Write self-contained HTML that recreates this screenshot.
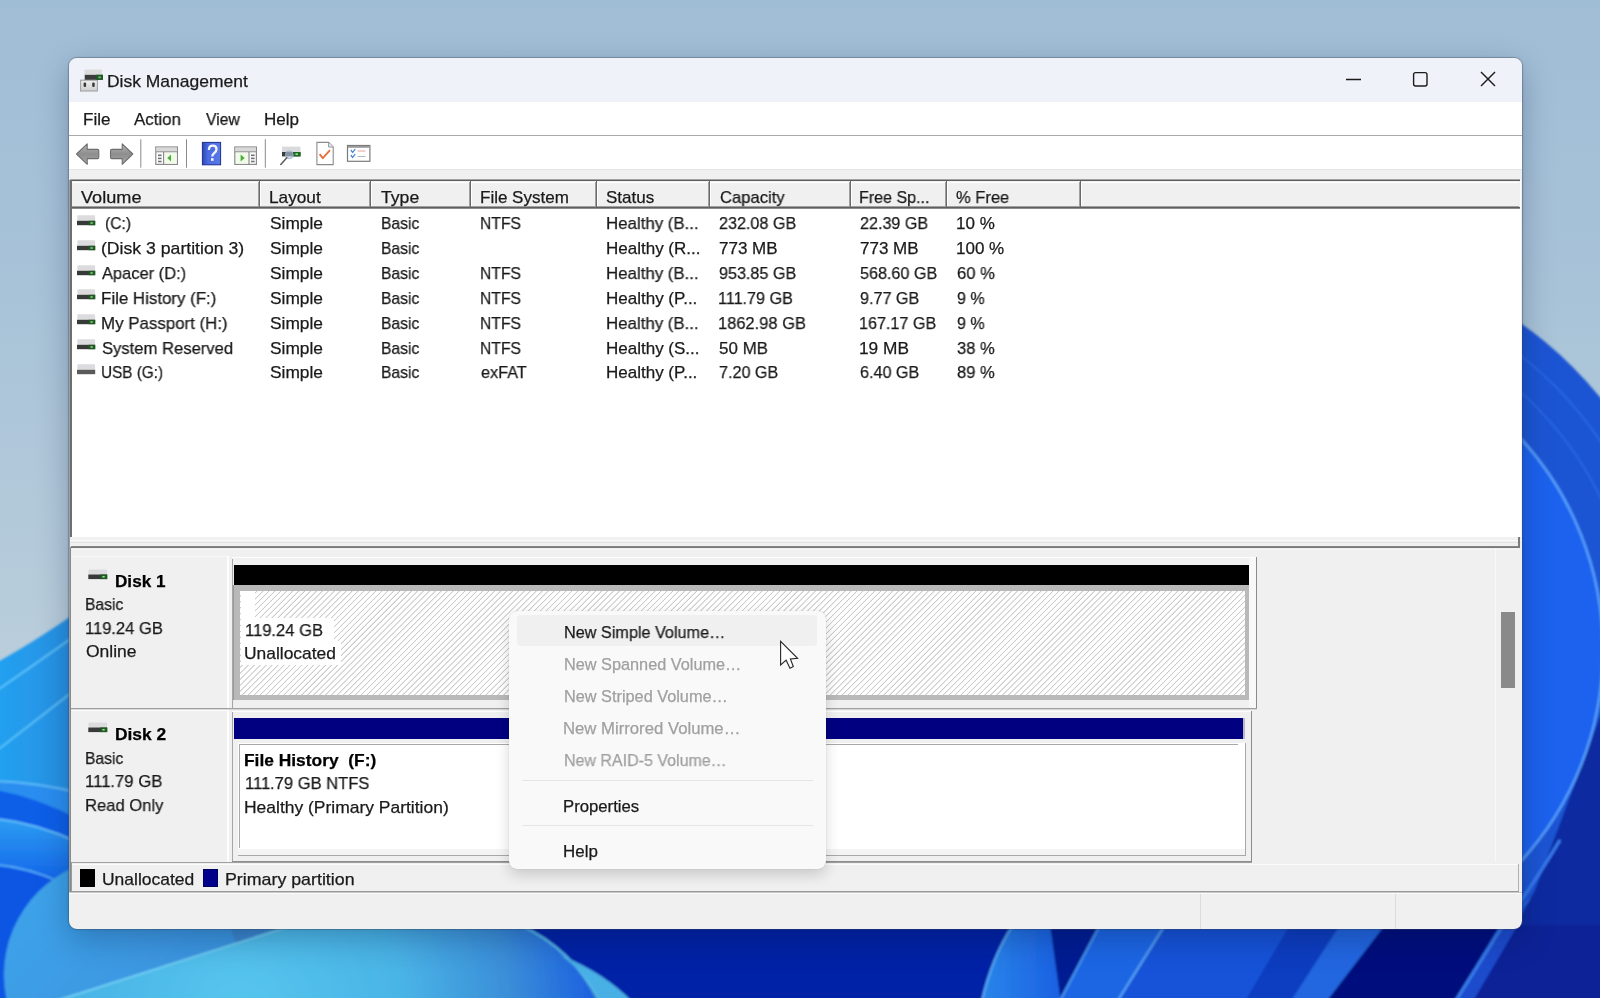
<!DOCTYPE html>
<html><head><meta charset="utf-8"><title>Disk Management</title>
<style>
html,body{margin:0;padding:0;}
body{width:1600px;height:998px;overflow:hidden;position:relative;font-family:"Liberation Sans",sans-serif;background:#a9c4d9;}
.a{position:absolute;}
.t{position:absolute;height:0;line-height:0;white-space:pre;transform-origin:0 0;will-change:transform;-webkit-text-stroke:0.25px currentColor;font-family:"Liberation Sans",sans-serif;}
#shadow{position:absolute;left:69px;top:58px;width:1453px;height:871px;border-radius:8px;box-shadow:0 10px 32px rgba(0,20,60,0.28),0 0 3px rgba(0,0,0,0.2);}
#win{position:absolute;left:69px;top:58px;width:1453px;height:871px;border-radius:8px;overflow:hidden;background:#f0f0f0;}
#wi{position:absolute;left:-69px;top:-58px;width:1600px;height:998px;}
.hdr{position:absolute;top:181px;height:27px;background:#f0f0f0;}
.sep{position:absolute;top:181px;height:26px;width:1px;background:#696969;}
.sepl{position:absolute;top:182px;height:25px;width:1px;background:#a0a0a0;}
.sepw{position:absolute;top:182px;height:24px;width:1px;background:#fff;}
.hatch{background-color:#fff;background-image:repeating-linear-gradient(-45deg,#fff 0px,#fff 2.7px,#cacaca 3.2px,#cacaca 3.6px,#fff 4.2px);}
#menu{position:absolute;left:509px;top:611px;width:317px;height:258px;border-radius:8px;background:#f9f9f9;box-shadow:0 6px 14px rgba(0,0,0,0.16),0 0 1px rgba(0,0,0,0.25);}
</style></head><body>
<svg class="a" style="left:0;top:0" width="1600" height="998" viewBox="0 0 1600 998">
<defs>
<linearGradient id="bg" x1="0" y1="0" x2="0" y2="1">
 <stop offset="0" stop-color="#a0bdd6"/><stop offset="0.3" stop-color="#a8c3d8"/><stop offset="0.65" stop-color="#b9cddb"/><stop offset="1" stop-color="#bdd0dc"/>
</linearGradient>
<linearGradient id="lp" x1="0" y1="0" x2="1" y2="0">
 <stop offset="0" stop-color="#22a2f2"/><stop offset="1" stop-color="#2a8ee0"/>
</linearGradient>
<linearGradient id="circ" x1="0" y1="0" x2="1" y2="1">
 <stop offset="0" stop-color="#3ea6ec"/><stop offset="1" stop-color="#3a8cd8"/>
</linearGradient>
<linearGradient id="cyan" x1="0" y1="0" x2="1" y2="0">
 <stop offset="0" stop-color="#52c2ec"/><stop offset="0.7" stop-color="#44ace2"/><stop offset="1" stop-color="#2a78e0"/>
</linearGradient>
<linearGradient id="teal" x1="0" y1="0" x2="0" y2="1">
 <stop offset="0" stop-color="#3a8ec4"/><stop offset="1" stop-color="#1a5ee0"/>
</linearGradient>
<linearGradient id="rb" x1="0" y1="0" x2="0" y2="1">
 <stop offset="0" stop-color="#1a56d6"/><stop offset="1" stop-color="#1a5ae0"/>
</linearGradient>
<linearGradient id="rb2" x1="0" y1="0" x2="1" y2="0">
 <stop offset="0" stop-color="#0c46d0"/><stop offset="1" stop-color="#1e68f2"/>
</linearGradient>
<linearGradient id="pa" x1="0" y1="0" x2="1" y2="0">
 <stop offset="0" stop-color="#2a86ea"/><stop offset="1" stop-color="#1a5ee2"/>
</linearGradient>
<radialGradient id="cy2" cx="240" cy="1010" r="360" gradientUnits="userSpaceOnUse"><stop offset="0" stop-color="#56c6ee"/><stop offset="0.45" stop-color="#4ab4e6"/><stop offset="0.75" stop-color="#3a8ed8"/><stop offset="1" stop-color="#1a5ee0"/></radialGradient>
<linearGradient id="e5" x1="0" y1="820" x2="0" y2="880" gradientUnits="userSpaceOnUse"><stop offset="0" stop-color="#2c9cf2"/><stop offset="1" stop-color="#1466ea"/></linearGradient>
<filter id="soft" x="-5%" y="-5%" width="110%" height="110%"><feGaussianBlur stdDeviation="1.2"/></filter>
</defs>
<rect width="1600" height="998" fill="url(#bg)"/>
<g filter="url(#soft)">
<rect x="80" y="905" width="530" height="110" fill="#3a86cc"/>
<!-- LEFT petals -->
<path d="M-10,666 Q30,645 80,610 L80,1010 L-10,1010 Z" fill="url(#lp)"/>
<path d="M-10,695 Q30,668 80,632" stroke="#6dd2ff" stroke-width="1.6" fill="none" opacity="0.8"/>
<path d="M-10,756 Q30,725 80,686" stroke="#6dd2ff" stroke-width="1.6" fill="none" opacity="0.8"/>
<path d="M-10,781 Q35,782 80,793 L80,1010 L-10,1010 Z" fill="#2a8ef0"/>
<path d="M-10,781 Q35,782 80,793" stroke="#72ccff" stroke-width="1.8" fill="none" opacity="0.8"/>
<path d="M-10,789 Q35,796 80,820 L80,843 Q35,822 -10,818 Z" fill="#0a5ee8"/>
<path d="M-10,818 Q35,822 80,843 L80,1010 L-10,1010 Z" fill="url(#e5)"/>
<path d="M-10,818 Q35,822 80,843" stroke="#7ad4ff" stroke-width="1.8" fill="none" opacity="0.8"/>
<path d="M-10,866 Q30,868 80,890 L80,1010 L-10,1010 Z" fill="#0a56e4"/>
<path d="M-10,864 Q25,866 60,882" stroke="#6cc4fa" stroke-width="1.6" fill="none" opacity="0.8"/>
<circle cx="122" cy="975" r="118" fill="url(#circ)"/>
<!-- RIGHT strip -->
<circle cx="1290" cy="650" r="400" fill="#1a54d4"/>
<circle cx="1290" cy="650" r="374" fill="none" stroke="#3474ea" stroke-width="2" opacity="0.6"/>
<circle cx="1290" cy="650" r="346" fill="none" stroke="#3474ea" stroke-width="2" opacity="0.6"/>
<path d="M1470,1010 L1535,890 L1610,690 L1610,1010 Z" fill="#0a2aa0"/>
<circle cx="1290" cy="650" r="313" fill="#1b62ee"/>
<circle cx="1290" cy="650" r="313" fill="none" stroke="#5aa6ff" stroke-width="2.2"/>
<!-- BOTTOM strip -->
<path d="M40,1006 L300,923 L520,923 Q575,950 600,1010 L40,1010 Z" fill="url(#cy2)"/>
<path d="M40,1006 L300,923" stroke="#7ad8f8" stroke-width="1.6" fill="none"/>
<path d="M520,925 Q575,950 605,1010 L1530,1010 L1530,925 Z" fill="#0624a6"/>
<path d="M520,925 Q575,950 605,1010" stroke="#5ac0f0" stroke-width="2" fill="none"/>
<path d="M560,955 Q610,975 640,1010 L605,1010 Q590,975 560,955 Z" fill="#48b0e6"/>
<path d="M1013,925 L1050,925 L1066,990 L1062,1010 L980,1010 Q990,960 1013,925 Z" fill="url(#pa)"/>
<path d="M1013,925 Q990,960 980,1010" stroke="#5aaef8" stroke-width="2" fill="none"/>
<path d="M1050,925 L1100,925 L1055,1010 L1062,1010 Z" fill="#061a92"/>
<path d="M1100,925 L1165,925 L1120,1010 L1055,1010 Z" fill="#1c66e4"/>
<path d="M1100,925 L1055,1010" stroke="#4a9af4" stroke-width="2" fill="none"/>
<path d="M1165,925 L1340,925 L1285,1010 L1112,1010 Z" fill="#1452d8"/>
<path d="M1165,925 L1112,1010" stroke="#5aa8f8" stroke-width="2" fill="none"/>
<path d="M1290,925 L1340,925 L1285,1010 L1240,1010 Z" fill="#0c3cc0"/>
<path d="M1340,925 L1385,925 L1320,1010 L1285,1010 Z" fill="#2466e0"/>
<path d="M1385,925 L1500,925 L1450,1010 L1320,1010 Z" fill="#04107c"/>
<path d="M1500,925 L1518,925 L1468,1010 L1450,1010 Z" fill="#1a4ccc"/>
<path d="M1518,925 L1610,925 L1610,1010 L1468,1010 Z" fill="#0a2296"/>
<path d="M1560,840 Q1530,890 1500,930 L1450,1010" stroke="#3a7ef0" stroke-width="3" fill="none"/>
</g>
</svg>

<div id="shadow"></div>
<div id="win"><div id="wi">
<!-- title bar -->
<div class="a" style="left:69px;top:58px;width:1453px;height:44px;background:#eff2f9;"></div>
<svg class="a" style="left:78px;top:68px" width="28" height="26" viewBox="0 0 28 26">
  <defs><linearGradient id="ig1" x1="0" y1="0" x2="0" y2="1"><stop offset="0" stop-color="#efefef"/><stop offset="1" stop-color="#cfcfcf"/></linearGradient></defs>
  <rect x="6.5" y="1.6" width="17.5" height="5.2" fill="#dcdcdc"/>
  <rect x="2.6" y="12.2" width="16.8" height="10.8" fill="url(#ig1)" stroke="#a2a2a2" stroke-width="1.1"/>
  <rect x="5.6" y="14.6" width="2.5" height="4.4" rx="1" fill="#3a3a3a"/><rect x="14.2" y="14.6" width="2.5" height="4.4" rx="1" fill="#3a3a3a"/>
  <rect x="6.7" y="6.8" width="18.3" height="5" fill="#3d3c3c"/>
  <rect x="18" y="6.8" width="7" height="5" fill="#1f5a24"/><rect x="20.4" y="8.5" width="2.4" height="1.6" fill="#7cc07c"/>
</svg>
<svg class="a" style="left:1340px;top:66px" width="170" height="26" viewBox="1340 66 170 26">
  <line x1="1346" y1="79.5" x2="1361" y2="79.5" stroke="#1b1b1b" stroke-width="1.4"/>
  <rect x="1413.6" y="72.6" width="13.4" height="13.4" rx="2" fill="none" stroke="#1b1b1b" stroke-width="1.4"/>
  <line x1="1481" y1="72" x2="1495" y2="86" stroke="#1b1b1b" stroke-width="1.4"/>
  <line x1="1495" y1="72" x2="1481" y2="86" stroke="#1b1b1b" stroke-width="1.4"/>
</svg>
<!-- menu bar + toolbar -->
<div class="a" style="left:69px;top:102px;width:1453px;height:67px;background:#fff;"></div>
<div class="a" style="left:69px;top:135px;width:1453px;height:1px;background:#a9a9a9;"></div>
<svg class="a" style="left:69px;top:135px" width="320" height="34" viewBox="69 135 320 34">
<defs>
<linearGradient id="arr" x1="0" y1="0" x2="0" y2="1"><stop offset="0" stop-color="#b4b4b4"/><stop offset="0.5" stop-color="#8e8e8e"/><stop offset="1" stop-color="#a6a6a6"/></linearGradient>
<linearGradient id="hlp" x1="0" y1="0" x2="1" y2="0"><stop offset="0" stop-color="#2a48b8"/><stop offset="0.3" stop-color="#4a6ae0"/><stop offset="1" stop-color="#5a7ae8"/></linearGradient>
</defs>
<!-- back -->
<path d="M76.5,154 L87.2,143.8 L87.2,149.4 L97.5,149.4 Q98.8,149.4 98.8,150.8 L98.8,157.2 Q98.8,158.6 97.5,158.6 L87.2,158.6 L87.2,164.3 Z" fill="url(#arr)" stroke="#6e6e6e" stroke-width="1.1" stroke-linejoin="round"/>
<!-- forward -->
<path d="M132.8,154 L122.2,143.8 L122.2,149.4 L111.8,149.4 Q110.5,149.4 110.5,150.8 L110.5,157.2 Q110.5,158.6 111.8,158.6 L122.2,158.6 L122.2,164.3 Z" fill="url(#arr)" stroke="#6e6e6e" stroke-width="1.1" stroke-linejoin="round"/>
<rect x="140.3" y="139.3" width="1" height="28.4" fill="#8a8a8a"/>
<rect x="186" y="139.3" width="1" height="28.4" fill="#8a8a8a"/>
<rect x="264.8" y="139.3" width="1" height="28.4" fill="#8a8a8a"/>
<!-- icon3: window w/ left pane + green left triangle -->
<rect x="155.8" y="147" width="21.6" height="17.4" fill="#fff" stroke="#8a8a8a" stroke-width="1.2"/>
<rect x="156.4" y="147.6" width="20.4" height="4" fill="#d8d8d8"/>
<line x1="156" y1="151.8" x2="177.2" y2="151.8" stroke="#8a8a8a" stroke-width="1"/>
<line x1="163.6" y1="152" x2="163.6" y2="164" stroke="#8a8a8a" stroke-width="1.2"/>
<rect x="158" y="154.5" width="3.6" height="1.6" fill="#707078"/><rect x="158" y="157.6" width="3.6" height="1.6" fill="#707078"/><rect x="158" y="160.7" width="3.6" height="1.6" fill="#707078"/>
<rect x="165" y="153" width="11.6" height="10.6" fill="#f0fbe8"/>
<path d="M167.3,158 L171,154.6 L171,161.4 Z" fill="#4caf3c"/>
<!-- help -->
<rect x="202.4" y="142.4" width="18.2" height="22.4" fill="url(#hlp)" stroke="#1c2f90" stroke-width="1"/>
<path d="M208.9,149.9 C208.9,146.9 210.9,145.7 212.9,145.7 C215.3,145.7 216.5,147.3 216.5,149.3 C216.5,151.5 214.9,152.5 213.9,153.3 C212.8,154.2 212.3,154.9 212.3,156.5" fill="none" stroke="#f4f6ff" stroke-width="2.3"/><rect x="211" y="158.2" width="2.6" height="2.6" fill="#f4f6ff"/>
<!-- icon5 -->
<rect x="234.8" y="147" width="21.6" height="17.4" fill="#fff" stroke="#8a8a8a" stroke-width="1.2"/>
<rect x="235.4" y="147.6" width="20.4" height="4" fill="#d8d8d8"/>
<line x1="235" y1="151.8" x2="256.2" y2="151.8" stroke="#8a8a8a" stroke-width="1"/>
<line x1="249" y1="152" x2="249" y2="164" stroke="#8a8a8a" stroke-width="1.2"/>
<rect x="251" y="154.5" width="3.6" height="1.6" fill="#707078"/><rect x="251" y="157.6" width="3.6" height="1.6" fill="#707078"/><rect x="251" y="160.7" width="3.6" height="1.6" fill="#707078"/>
<rect x="236" y="153" width="12" height="10.6" fill="#f0fbe8"/>
<path d="M244.7,158 L240.6,154.6 L240.6,161.4 Z" fill="#4caf3c"/>
<!-- icon6: disk + magnifier -->
<rect x="282" y="146.6" width="18.5" height="5.6" fill="#dadadc"/>
<rect x="282" y="152" width="18.5" height="4.4" fill="#3a3c3a"/>
<rect x="293.5" y="152" width="7" height="4.4" fill="#1e6a24"/><rect x="295.5" y="153.4" width="2.4" height="1.5" fill="#a0f0a0"/>
<circle cx="289.3" cy="154.8" r="3.9" fill="#b4cce4" fill-opacity="0.6" stroke="#9ab0c8" stroke-width="0.9"/>
<line x1="286.8" y1="157.8" x2="280.8" y2="164.4" stroke="#5a5a5a" stroke-width="1.5" stroke-linecap="round"/>
<!-- icon7: document w/ check -->
<path d="M316.9,142.4 L328.6,142.4 L333.2,147 L333.2,164.6 L316.9,164.6 Z" fill="#fff" stroke="#8a8a8a" stroke-width="1.1"/>
<path d="M328.6,142.4 L328.6,147 L333.2,147" fill="#e6eef4" stroke="#8a8a8a" stroke-width="0.9"/>
<path d="M319.6,154.2 L322.8,158.2 L330,150.2" fill="none" stroke="#e8703e" stroke-width="1.9" stroke-linejoin="round"/>
<!-- icon8: window w/ checklist -->
<rect x="347.5" y="145.5" width="22.4" height="15.8" fill="#fff" stroke="#7a7a7a" stroke-width="1.2"/>
<rect x="348" y="146" width="21.4" height="1.8" fill="#9a9a9a"/>
<path d="M350.8,150 L352.6,152.4 L355.2,149.2" fill="none" stroke="#4a8ad8" stroke-width="1.3"/>
<path d="M350.8,155 L352.6,157.4 L355.2,154.2" fill="none" stroke="#4a8ad8" stroke-width="1.3"/>
<line x1="357.5" y1="151" x2="365.5" y2="151" stroke="#e0a0a0" stroke-width="1"/>
<line x1="357.5" y1="156.5" x2="365.5" y2="156.5" stroke="#b0b8c8" stroke-width="1"/>
</svg>

<!-- list view -->
<div class="a" style="left:70px;top:180px;width:1451px;height:357px;background:#fff;"></div>
<div class="a" style="left:69px;top:169px;width:1453px;height:1px;background:#e4e4e4;"></div>
<div class="a" style="left:70px;top:179px;width:1450px;height:1px;background:#a4a4a4;"></div>
<div class="a" style="left:70px;top:180px;width:1450px;height:1px;background:#5e5e5e;"></div>
<div class="a" style="left:69px;top:180px;width:1px;height:712px;background:#9aa0a6;"></div>
<div class="a" style="left:70px;top:180px;width:2px;height:357px;background:#6e6e6e;"></div>
<div class="a" style="left:70px;top:547px;width:1px;height:345px;background:#8a8a8a;"></div>
<div class="hdr" style="left:72px;width:1448px;"></div>
<div class="a" style="left:72px;top:182px;width:1447px;height:1px;background:#fff;"></div>
<div class="a" style="left:72px;top:206px;width:1447px;height:1px;background:#a0a0a0;"></div>
<div class="a" style="left:72px;top:207px;width:1448px;height:1px;background:#5e5e5e;"></div>
<div class="a" style="left:72px;top:208px;width:1448px;height:1px;background:#8c8c8c;"></div>
<div class="sepl" style="left:258px"></div><div class="sep" style="left:259px"></div><div class="sepw" style="left:260px"></div>
<div class="sepl" style="left:369px"></div><div class="sep" style="left:370px"></div><div class="sepw" style="left:371px"></div>
<div class="sepl" style="left:469px"></div><div class="sep" style="left:470px"></div><div class="sepw" style="left:471px"></div>
<div class="sepl" style="left:595px"></div><div class="sep" style="left:596px"></div><div class="sepw" style="left:597px"></div>
<div class="sepl" style="left:708px"></div><div class="sep" style="left:709px"></div><div class="sepw" style="left:710px"></div>
<div class="sepl" style="left:849px"></div><div class="sep" style="left:850px"></div><div class="sepw" style="left:851px"></div>
<div class="sepl" style="left:945px"></div><div class="sep" style="left:946px"></div><div class="sepw" style="left:947px"></div>
<div class="sepl" style="left:1079px"></div><div class="sep" style="left:1080px"></div><div class="sepw" style="left:1081px"></div>
<svg class="a" style="left:76px;top:214.8px" width="21" height="12" viewBox="0 0 21 12">
<rect x="1.3" y="0.3" width="17.8" height="5.8" rx="0.8" fill="#dcdcde"/>
<rect x="1" y="5.8" width="18.2" height="4.4" fill="#373a38"/>
<rect x="12.5" y="5.8" width="6.7" height="4.4" fill="#1e5a22"/><rect x="14.5" y="7.3" width="2.2" height="1.4" fill="#9ae09a"/>
</svg>
<svg class="a" style="left:76px;top:239.6px" width="21" height="12" viewBox="0 0 21 12">
<rect x="1.3" y="0.3" width="17.8" height="5.8" rx="0.8" fill="#dcdcde"/>
<rect x="1" y="5.8" width="18.2" height="4.4" fill="#373a38"/>
<rect x="12.5" y="5.8" width="6.7" height="4.4" fill="#1e5a22"/><rect x="14.5" y="7.3" width="2.2" height="1.4" fill="#9ae09a"/>
</svg>
<svg class="a" style="left:76px;top:264.5px" width="21" height="12" viewBox="0 0 21 12">
<rect x="1.3" y="0.3" width="17.8" height="5.8" rx="0.8" fill="#dcdcde"/>
<rect x="1" y="5.8" width="18.2" height="4.4" fill="#373a38"/>
<rect x="12.5" y="5.8" width="6.7" height="4.4" fill="#1e5a22"/><rect x="14.5" y="7.3" width="2.2" height="1.4" fill="#9ae09a"/>
</svg>
<svg class="a" style="left:76px;top:289.3px" width="21" height="12" viewBox="0 0 21 12">
<rect x="1.3" y="0.3" width="17.8" height="5.8" rx="0.8" fill="#dcdcde"/>
<rect x="1" y="5.8" width="18.2" height="4.4" fill="#373a38"/>
<rect x="12.5" y="5.8" width="6.7" height="4.4" fill="#1e5a22"/><rect x="14.5" y="7.3" width="2.2" height="1.4" fill="#9ae09a"/>
</svg>
<svg class="a" style="left:76px;top:314.1px" width="21" height="12" viewBox="0 0 21 12">
<rect x="1.3" y="0.3" width="17.8" height="5.8" rx="0.8" fill="#dcdcde"/>
<rect x="1" y="5.8" width="18.2" height="4.4" fill="#373a38"/>
<rect x="12.5" y="5.8" width="6.7" height="4.4" fill="#1e5a22"/><rect x="14.5" y="7.3" width="2.2" height="1.4" fill="#9ae09a"/>
</svg>
<svg class="a" style="left:76px;top:338.9px" width="21" height="12" viewBox="0 0 21 12">
<rect x="1.3" y="0.3" width="17.8" height="5.8" rx="0.8" fill="#dcdcde"/>
<rect x="1" y="5.8" width="18.2" height="4.4" fill="#373a38"/>
<rect x="12.5" y="5.8" width="6.7" height="4.4" fill="#1e5a22"/><rect x="14.5" y="7.3" width="2.2" height="1.4" fill="#9ae09a"/>
</svg>
<svg class="a" style="left:76px;top:363.8px" width="21" height="12" viewBox="0 0 21 12">
<rect x="1.3" y="0.3" width="17.8" height="5.8" rx="0.8" fill="#dcdcde"/>
<rect x="1" y="5.8" width="18.2" height="4.4" fill="#5a5a5a"/>

</svg>
<!-- splitter -->
<div class="a" style="left:70px;top:537px;width:1451px;height:10px;background:#f0f0f0;"></div>
<div class="a" style="left:70px;top:540px;width:1451px;height:1px;background:#fafafa;"></div>
<div class="a" style="left:70px;top:542px;width:1451px;height:1px;background:#e4e4e4;"></div>
<div class="a" style="left:71px;top:546px;width:1448px;height:1px;background:#858585;"></div>
<div class="a" style="left:71px;top:547px;width:1448px;height:1px;background:#7a7a7a;"></div>
<div class="a" style="left:71px;top:549px;width:1448px;height:1px;background:#f6f6f6;"></div>
<div class="a" style="left:1518px;top:537px;width:1.5px;height:11px;background:#7c7c7c;"></div>
<!-- disk 1 label panel -->
<div class="a" style="left:71px;top:556px;width:156px;height:1px;background:#f8f8f8;"></div>
<div class="a" style="left:227px;top:556px;width:2px;height:152px;background:#fdfdfd;"></div>
<div class="a" style="left:71px;top:708px;width:1186px;height:1px;background:#a0a0a0;"></div>
<div class="a" style="left:71px;top:709px;width:1186px;height:1px;background:#d8d8d8;"></div>
<div class="a" style="left:71px;top:710px;width:158px;height:1px;background:#fdfdfd;"></div>
<div class="a" style="left:227px;top:710px;width:2px;height:152px;background:#fdfdfd;"></div>
<div class="a" style="left:71px;top:862px;width:1181px;height:1px;background:#a0a0a0;"></div>
<svg class="a" style="left:87px;top:568px" width="22" height="14" viewBox="0 0 22 14">
<rect x="1.5" y="1.4" width="18.5" height="5.2" rx="0.8" fill="#dcdcde"/>
<rect x="1.3" y="6.5" width="18.9" height="4.6" fill="#373a38"/>
<rect x="13.3" y="6.5" width="6.9" height="4.6" fill="#1e5a22"/><rect x="15.4" y="8" width="2.3" height="1.5" fill="#9ae09a"/>
</svg>
<svg class="a" style="left:87px;top:721px" width="22" height="14" viewBox="0 0 22 14">
<rect x="1.5" y="1.4" width="18.5" height="5.2" rx="0.8" fill="#dcdcde"/>
<rect x="1.3" y="6.5" width="18.9" height="4.6" fill="#373a38"/>
<rect x="13.3" y="6.5" width="6.9" height="4.6" fill="#1e5a22"/><rect x="15.4" y="8" width="2.3" height="1.5" fill="#9ae09a"/>
</svg>
<!-- disk 1 area -->
<div class="a" style="left:232px;top:557px;width:1024px;height:1px;background:#fdfdfd;"></div>
<div class="a" style="left:232px;top:559px;width:1px;height:149px;background:#a6a6a6;"></div>
<div class="a" style="left:1249px;top:558px;width:7px;height:150px;background:#f8f8f8;"></div>
<div class="a" style="left:1256px;top:557px;width:1px;height:151px;background:#8c8c8c;"></div>
<div class="a" style="left:234px;top:565px;width:1015px;height:20px;background:#000;"></div>
<div class="a" style="left:233px;top:585px;width:1016px;height:115px;background:#b9b9b9;"></div>
<div class="a" style="left:233px;top:585px;width:1px;height:115px;background:#9a9a9a;"></div>
<div class="a hatch" style="left:239.5px;top:591px;width:1005px;height:104px;"></div>
<div class="a" style="left:241px;top:591px;width:14px;height:28px;background:#fff;"></div>
<div class="a" style="left:241px;top:618px;width:93px;height:23px;background:#fff;"></div>
<div class="a" style="left:241px;top:641px;width:100px;height:24px;background:#fff;"></div>
<!-- disk 2 area -->
<div class="a" style="left:232px;top:711px;width:1019px;height:1px;background:#fdfdfd;"></div>
<div class="a" style="left:232px;top:712px;width:1px;height:149px;background:#a6a6a6;"></div>
<div class="a" style="left:1251px;top:711px;width:1px;height:150px;background:#8c8c8c;"></div>
<div class="a" style="left:232px;top:861px;width:1020px;height:1px;background:#8c8c8c;"></div>
<div class="a" style="left:234px;top:718px;width:1009px;height:20.5px;background:#000080;"></div>
<div class="a" style="left:1243px;top:718px;width:2px;height:21px;background:#b8b8c8;"></div>
<div class="a" style="left:238px;top:743px;width:1008px;height:113px;background:#fff;"></div>
<div class="a" style="left:239px;top:744px;width:999px;height:1px;background:#a8a8a8;"></div>
<div class="a" style="left:239px;top:744px;width:1px;height:104px;background:#a8a8a8;"></div>
<div class="a" style="left:1245px;top:743px;width:1px;height:113px;background:#a8a8a8;"></div>
<div class="a" style="left:238px;top:855px;width:1008px;height:1px;background:#a8a8a8;"></div>
<div class="a" style="left:238px;top:849px;width:1007px;height:6px;background:#f4f4f4;"></div>
<!-- scrollbar -->
<div class="a" style="left:1495px;top:548px;width:1px;height:314px;background:#f8f8f8;"></div>
<div class="a" style="left:1500.5px;top:612px;width:14px;height:75.5px;background:#8a8a8a;"></div>
<!-- legend -->
<div class="a" style="left:71px;top:863px;width:1448px;height:29px;background:#f0f0f0;"></div>
<div class="a" style="left:71px;top:864px;width:1448px;height:1px;background:#fcfcfc;"></div>
<div class="a" style="left:71px;top:863px;width:1px;height:29px;background:#9a9a9a;"></div>
<div class="a" style="left:1518px;top:864px;width:1px;height:28px;background:#b0b0b0;"></div>
<div class="a" style="left:71px;top:891px;width:1448px;height:1px;background:#9a9a9a;"></div>
<div class="a" style="left:69px;top:892px;width:1453px;height:1px;background:#c8c8c8;"></div>
<div class="a" style="left:69px;top:893px;width:1453px;height:1px;background:#fbfbfb;"></div>
<div class="a" style="left:80px;top:869px;width:15px;height:17.5px;background:#000;"></div>
<div class="a" style="left:203px;top:869px;width:15px;height:17.5px;background:#00008a;box-shadow:inset 0 0 0 1px #000060;"></div>
<!-- status bar -->
<div class="a" style="left:1199.5px;top:894px;width:1px;height:35px;background:#dcdcdc;"></div>
<div class="a" style="left:1394.5px;top:894px;width:1px;height:35px;background:#dcdcdc;"></div>

<div class="t" style="left:106.97px;top:82.00px;font-size:17px;color:#1a1a1a;transform:scaleX(1.0273);">Disk Management</div>
<div class="t" style="left:83.21px;top:120.00px;font-size:17px;color:#1a1a1a;transform:scaleX(0.9947);">File</div>
<div class="t" style="left:134.00px;top:120.00px;font-size:17px;color:#1a1a1a;transform:scaleX(0.9937);">Action</div>
<div class="t" style="left:206.00px;top:120.00px;font-size:17px;color:#1a1a1a;transform:scaleX(0.9258);">View</div>
<div class="t" style="left:263.50px;top:120.00px;font-size:17px;color:#1a1a1a;">Help</div>
<div class="t" style="left:81.00px;top:198.00px;font-size:17px;color:#1a1a1a;transform:scaleX(1.0667);">Volume</div>
<div class="t" style="left:268.99px;top:198.00px;font-size:17px;color:#1a1a1a;transform:scaleX(1.0135);">Layout</div>
<div class="t" style="left:381.00px;top:198.00px;font-size:17px;color:#1a1a1a;transform:scaleX(1.0371);">Type</div>
<div class="t" style="left:479.75px;top:198.00px;font-size:17px;color:#1a1a1a;transform:scaleX(0.9956);">File System</div>
<div class="t" style="left:606.00px;top:198.00px;font-size:17px;color:#1a1a1a;">Status</div>
<div class="t" style="left:719.50px;top:198.00px;font-size:17px;color:#1a1a1a;transform:scaleX(0.9754);">Capacity</div>
<div class="t" style="left:859.06px;top:198.00px;font-size:17px;color:#1a1a1a;transform:scaleX(0.9428);">Free Sp...</div>
<div class="t" style="left:956.00px;top:198.00px;font-size:17px;color:#1a1a1a;transform:scaleX(0.9708);">% Free</div>
<div class="t" style="left:105.08px;top:224.00px;font-size:17px;color:#1a1a1a;transform:scaleX(0.9152);">(C:)</div>
<div class="t" style="left:269.75px;top:224.00px;font-size:17px;color:#1a1a1a;transform:scaleX(1.0193);">Simple</div>
<div class="t" style="left:380.58px;top:224.00px;font-size:17px;color:#1a1a1a;transform:scaleX(0.9228);">Basic</div>
<div class="t" style="left:479.98px;top:224.00px;font-size:17px;color:#1a1a1a;transform:scaleX(0.9223);">NTFS</div>
<div class="t" style="left:605.61px;top:224.00px;font-size:17px;color:#1a1a1a;transform:scaleX(0.9912);">Healthy (B...</div>
<div class="t" style="left:719.40px;top:224.00px;font-size:17px;color:#1a1a1a;transform:scaleX(0.9501);">232.08 GB</div>
<div class="t" style="left:859.80px;top:224.00px;font-size:17px;color:#1a1a1a;transform:scaleX(0.9484);">22.39 GB</div>
<div class="t" style="left:956.00px;top:224.00px;font-size:17px;color:#1a1a1a;transform:scaleX(0.9965);">10 %</div>
<div class="t" style="left:100.76px;top:249.00px;font-size:17px;color:#1a1a1a;transform:scaleX(1.0376);">(Disk 3 partition 3)</div>
<div class="t" style="left:269.75px;top:249.00px;font-size:17px;color:#1a1a1a;transform:scaleX(1.0193);">Simple</div>
<div class="t" style="left:380.58px;top:249.00px;font-size:17px;color:#1a1a1a;transform:scaleX(0.9228);">Basic</div>
<div class="t" style="left:605.60px;top:249.00px;font-size:17px;color:#1a1a1a;">Healthy (R...</div>
<div class="t" style="left:719.40px;top:249.00px;font-size:17px;color:#1a1a1a;">773 MB</div>
<div class="t" style="left:859.80px;top:249.00px;font-size:17px;color:#1a1a1a;">773 MB</div>
<div class="t" style="left:956.00px;top:249.00px;font-size:17px;color:#1a1a1a;">100 %</div>
<div class="t" style="left:101.80px;top:274.00px;font-size:17px;color:#1a1a1a;transform:scaleX(0.9681);">Apacer (D:)</div>
<div class="t" style="left:269.75px;top:274.00px;font-size:17px;color:#1a1a1a;transform:scaleX(1.0193);">Simple</div>
<div class="t" style="left:380.58px;top:274.00px;font-size:17px;color:#1a1a1a;transform:scaleX(0.9228);">Basic</div>
<div class="t" style="left:479.98px;top:274.00px;font-size:17px;color:#1a1a1a;transform:scaleX(0.9223);">NTFS</div>
<div class="t" style="left:605.61px;top:274.00px;font-size:17px;color:#1a1a1a;transform:scaleX(0.9912);">Healthy (B...</div>
<div class="t" style="left:719.40px;top:274.00px;font-size:17px;color:#1a1a1a;transform:scaleX(0.9500);">953.85 GB</div>
<div class="t" style="left:859.80px;top:274.00px;font-size:17px;color:#1a1a1a;transform:scaleX(0.9501);">568.60 GB</div>
<div class="t" style="left:957.00px;top:274.00px;font-size:17px;color:#1a1a1a;transform:scaleX(0.9759);">60 %</div>
<div class="t" style="left:100.81px;top:299.00px;font-size:17px;color:#1a1a1a;transform:scaleX(0.9930);">File History (F:)</div>
<div class="t" style="left:269.75px;top:299.00px;font-size:17px;color:#1a1a1a;transform:scaleX(1.0193);">Simple</div>
<div class="t" style="left:380.58px;top:299.00px;font-size:17px;color:#1a1a1a;transform:scaleX(0.9228);">Basic</div>
<div class="t" style="left:479.98px;top:299.00px;font-size:17px;color:#1a1a1a;transform:scaleX(0.9223);">NTFS</div>
<div class="t" style="left:605.60px;top:299.00px;font-size:17px;color:#1a1a1a;">Healthy (P...</div>
<div class="t" style="left:718.45px;top:299.00px;font-size:17px;color:#1a1a1a;transform:scaleX(0.9500);">111.79 GB</div>
<div class="t" style="left:859.80px;top:299.00px;font-size:17px;color:#1a1a1a;transform:scaleX(0.9500);">9.77 GB</div>
<div class="t" style="left:957.00px;top:299.00px;font-size:17px;color:#1a1a1a;transform:scaleX(0.9425);">9 %</div>
<div class="t" style="left:100.81px;top:324.00px;font-size:17px;color:#1a1a1a;transform:scaleX(0.9932);">My Passport (H:)</div>
<div class="t" style="left:269.75px;top:324.00px;font-size:17px;color:#1a1a1a;transform:scaleX(1.0193);">Simple</div>
<div class="t" style="left:380.58px;top:324.00px;font-size:17px;color:#1a1a1a;transform:scaleX(0.9228);">Basic</div>
<div class="t" style="left:479.98px;top:324.00px;font-size:17px;color:#1a1a1a;transform:scaleX(0.9223);">NTFS</div>
<div class="t" style="left:605.61px;top:324.00px;font-size:17px;color:#1a1a1a;transform:scaleX(0.9912);">Healthy (B...</div>
<div class="t" style="left:718.43px;top:324.00px;font-size:17px;color:#1a1a1a;transform:scaleX(0.9687);">1862.98 GB</div>
<div class="t" style="left:858.85px;top:324.00px;font-size:17px;color:#1a1a1a;transform:scaleX(0.9500);">167.17 GB</div>
<div class="t" style="left:957.00px;top:324.00px;font-size:17px;color:#1a1a1a;transform:scaleX(0.9425);">9 %</div>
<div class="t" style="left:101.80px;top:349.00px;font-size:17px;color:#1a1a1a;transform:scaleX(0.9768);">System Reserved</div>
<div class="t" style="left:269.75px;top:349.00px;font-size:17px;color:#1a1a1a;transform:scaleX(1.0193);">Simple</div>
<div class="t" style="left:380.58px;top:349.00px;font-size:17px;color:#1a1a1a;transform:scaleX(0.9228);">Basic</div>
<div class="t" style="left:479.98px;top:349.00px;font-size:17px;color:#1a1a1a;transform:scaleX(0.9223);">NTFS</div>
<div class="t" style="left:605.60px;top:349.00px;font-size:17px;color:#1a1a1a;">Healthy (S...</div>
<div class="t" style="left:719.40px;top:349.00px;font-size:17px;color:#1a1a1a;transform:scaleX(0.9960);">50 MB</div>
<div class="t" style="left:858.78px;top:349.00px;font-size:17px;color:#1a1a1a;transform:scaleX(1.0169);">19 MB</div>
<div class="t" style="left:957.00px;top:349.00px;font-size:17px;color:#1a1a1a;transform:scaleX(0.9707);">38 %</div>
<div class="t" style="left:100.90px;top:373.00px;font-size:17px;color:#1a1a1a;transform:scaleX(0.9006);">USB (G:)</div>
<div class="t" style="left:269.75px;top:373.00px;font-size:17px;color:#1a1a1a;transform:scaleX(1.0193);">Simple</div>
<div class="t" style="left:380.58px;top:373.00px;font-size:17px;color:#1a1a1a;transform:scaleX(0.9228);">Basic</div>
<div class="t" style="left:480.90px;top:373.00px;font-size:17px;color:#1a1a1a;transform:scaleX(0.9541);">exFAT</div>
<div class="t" style="left:605.60px;top:373.00px;font-size:17px;color:#1a1a1a;">Healthy (P...</div>
<div class="t" style="left:719.40px;top:373.00px;font-size:17px;color:#1a1a1a;transform:scaleX(0.9500);">7.20 GB</div>
<div class="t" style="left:859.80px;top:373.00px;font-size:17px;color:#1a1a1a;transform:scaleX(0.9500);">6.40 GB</div>
<div class="t" style="left:957.00px;top:373.00px;font-size:17px;color:#1a1a1a;transform:scaleX(0.9707);">89 %</div>
<div class="t" style="left:115.19px;top:582.00px;font-size:17px;color:#000;font-weight:bold;transform:scaleX(1.0076);">Disk 1</div>
<div class="t" style="left:85.08px;top:605.00px;font-size:17px;color:#1a1a1a;transform:scaleX(0.9228);">Basic</div>
<div class="t" style="left:85.03px;top:629.00px;font-size:17px;color:#1a1a1a;transform:scaleX(0.9723);">119.24 GB</div>
<div class="t" style="left:86.00px;top:652.00px;font-size:17px;color:#1a1a1a;transform:scaleX(1.0290);">Online</div>
<div class="t" style="left:115.18px;top:735.00px;font-size:17px;color:#000;font-weight:bold;transform:scaleX(1.0220);">Disk 2</div>
<div class="t" style="left:85.08px;top:759.00px;font-size:17px;color:#1a1a1a;transform:scaleX(0.9228);">Basic</div>
<div class="t" style="left:85.02px;top:782.00px;font-size:17px;color:#1a1a1a;transform:scaleX(0.9817);">111.79 GB</div>
<div class="t" style="left:85.02px;top:806.00px;font-size:17px;color:#1a1a1a;transform:scaleX(0.9772);">Read Only</div>
<div class="t" style="left:244.53px;top:631.00px;font-size:17px;color:#1a1a1a;transform:scaleX(0.9748);">119.24 GB</div>
<div class="t" style="left:244.48px;top:654.00px;font-size:17px;color:#1a1a1a;transform:scaleX(1.0235);">Unallocated</div>
<div class="t" style="left:244.48px;top:761.00px;font-size:17px;color:#000;font-weight:bold;transform:scaleX(1.0217);">File History  (F:)</div>
<div class="t" style="left:244.53px;top:784.00px;font-size:17px;color:#1a1a1a;transform:scaleX(0.9721);">111.79 GB NTFS</div>
<div class="t" style="left:244.47px;top:808.00px;font-size:17px;color:#1a1a1a;transform:scaleX(1.0270);">Healthy (Primary Partition)</div>
<div class="t" style="left:101.97px;top:880.00px;font-size:17px;color:#1a1a1a;transform:scaleX(1.0274);">Unallocated</div>
<div class="t" style="left:225.35px;top:880.00px;font-size:17px;color:#1a1a1a;transform:scaleX(1.0466);">Primary partition</div>
<div id="menu">
<div class="a" style="left:8.4px;top:4.4px;width:300px;height:31px;border-radius:4px;background:#f0f0f0;"></div>
<div class="a" style="left:12.6px;top:169px;width:291.4px;height:1px;background:#e5e5e5;"></div>
<div class="a" style="left:12.6px;top:214px;width:291.4px;height:1px;background:#e5e5e5;"></div>
</div>
<div class="t" style="left:563.50px;top:632.00px;font-size:16.3px;color:#1a1a1a;transform:scaleX(0.9957);">New Simple Volume…</div>
<div class="t" style="left:563.50px;top:664.00px;font-size:16.3px;color:#a0a0a0;">New Spanned Volume…</div>
<div class="t" style="left:563.50px;top:696.00px;font-size:16.3px;color:#a0a0a0;">New Striped Volume…</div>
<div class="t" style="left:563.47px;top:728.00px;font-size:16.3px;color:#a0a0a0;transform:scaleX(1.0262);">New Mirrored Volume…</div>
<div class="t" style="left:563.52px;top:760.00px;font-size:16.3px;color:#a0a0a0;transform:scaleX(0.9823);">New RAID-5 Volume…</div>
<div class="t" style="left:563.47px;top:806.00px;font-size:16.3px;color:#1a1a1a;transform:scaleX(1.0265);">Properties</div>
<div class="t" style="left:563.46px;top:851.00px;font-size:16.3px;color:#1a1a1a;transform:scaleX(1.0392);">Help</div>
</div></div>
<div class="a" style="left:68px;top:57px;width:1453px;height:871px;border:1px solid rgba(70,80,95,0.3);border-radius:9px;"></div>
<svg class="a" style="left:770px;top:630px" width="40" height="45" viewBox="770 630 40 45">
<path d="M780.6,641.4 L780.6,665 L786.1,660.2 L790,668.2 L793.3,666.5 L790.4,659 L797.6,658.4 Z" fill="#fff" stroke="#262626" stroke-width="1.1" stroke-linejoin="miter"/>
</svg>

</body></html>
